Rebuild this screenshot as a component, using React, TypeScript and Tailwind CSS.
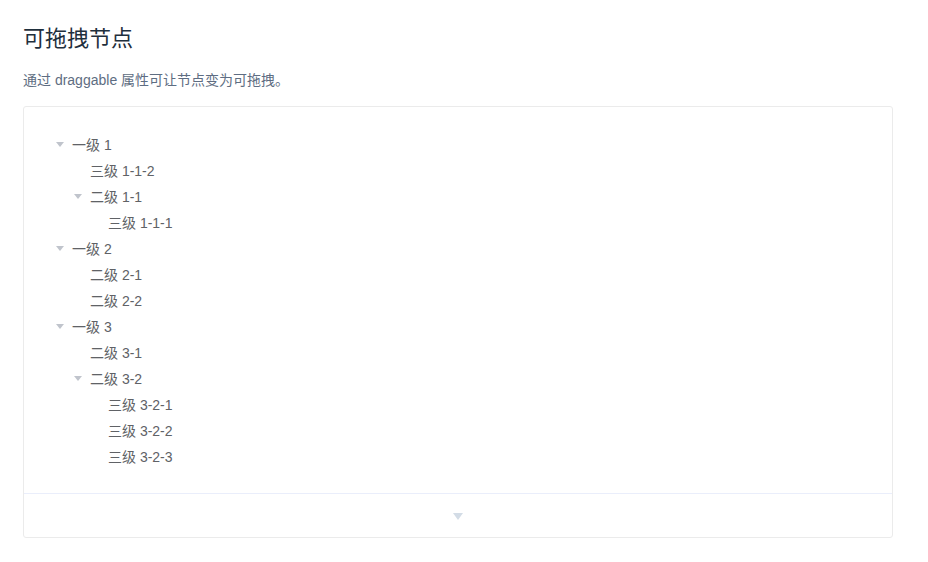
type TreeNode = {
  label: string;
  children?: TreeNode[];
};

const data: TreeNode[] = [
  {
    label: "一级 1",
    children: [
      { label: "三级 1-1-2" },
      { label: "二级 1-1", children: [{ label: "三级 1-1-1" }] },
    ],
  },
  {
    label: "一级 2",
    children: [{ label: "二级 2-1" }, { label: "二级 2-2" }],
  },
  {
    label: "一级 3",
    children: [
      { label: "二级 3-1" },
      {
        label: "二级 3-2",
        children: [
          { label: "三级 3-2-1" },
          { label: "三级 3-2-2" },
          { label: "三级 3-2-3" },
        ],
      },
    ],
  },
];

function Caret({ visible }: { visible: boolean }) {
  return (
    <span className="flex w-[24px] h-[26px] items-center justify-center">
      {visible && (
        <svg width="8" height="5" viewBox="0 0 8 5" className="mt-[1px]">
          <path d="M0 0 L8 0 L4 5 Z" fill="#c0c4cc" />
        </svg>
      )}
    </span>
  );
}

function TreeItem({ node, level }: { node: TreeNode; level: number }) {
  const hasChildren = !!node.children && node.children.length > 0;
  return (
    <div>
      <div
        className="flex h-[26px] items-center cursor-pointer hover:bg-[#f5f7fa]"
        style={{ paddingLeft: level * 18 }}
      >
        <Caret visible={hasChildren} />
        <span className="pt-[2px] text-[14px] text-[#606266]">{node.label}</span>
      </div>
      {hasChildren &&
        node.children!.map((child, idx) => (
          <TreeItem key={idx} node={child} level={level + 1} />
        ))}
    </div>
  );
}

export default function App() {
  return (
    <div
      className="min-h-[562px] bg-white px-[23px]"
      style={{ fontFamily: '"Liberation Sans", "Noto Sans CJK SC", sans-serif' }}
    >
      {/* 标题 */}
      <h3 className="pt-[22px] h-[55px] text-[22px] leading-[33px] font-normal text-[#1f2f3d]">
        可拖拽节点
      </h3>

      {/* 描述 */}
      <p className="mt-[14px] h-[21px] pt-[1px] text-[14px] leading-[21px] text-[#5e6d82]">
        通过 draggable 属性可让节点变为可拖拽。
      </p>

      {/* 示例 */}
      <div className="mt-[16px] w-[870px] rounded-[3px] border border-[#ebebeb]">
        <div className="p-[24px]">
          {data.map((node, idx) => (
            <TreeItem key={idx} node={node} level={0} />
          ))}
        </div>
        <div className="flex h-[44px] items-center justify-center border-t border-[#eaeefb]">
          <svg width="10" height="7" viewBox="0 0 10 7" className="mt-[1px]">
            <path d="M0 0 L10 0 L5 7 Z" fill="#d3dce6" />
          </svg>
        </div>
      </div>
    </div>
  );
}
